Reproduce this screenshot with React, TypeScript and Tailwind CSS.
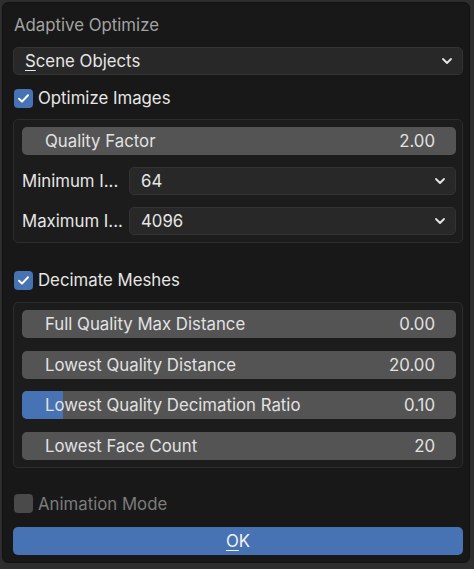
import type { ReactNode } from "react";

const FONT = { fontFamily: "Inter, 'DejaVu Sans', sans-serif" };

function Chevron() {
    return (
        <svg width="12" height="8" viewBox="0 0 12 8" className="shrink-0">
            <path d="M2 2 L6 6 L10 2" fill="none" stroke="#e6e6e6" strokeWidth="1.8" strokeLinecap="round" strokeLinejoin="round" />
        </svg>
    );
}

function Check({ on, label, disabled }: { on: boolean; label: string; disabled?: boolean }) {
    return (
        <div className="flex h-[20px] items-center gap-[5px] pl-[1px]">
            <span
                className={`flex h-[19px] w-[19px] items-center justify-center rounded-[4px] ${on ? "bg-[#4772b3]" : "bg-[#4a4a4a]"}`}
            >
                {on && (
                    <svg width="13" height="11" viewBox="0 0 13 11">
                        <path d="M2 5.8 L5 8.6 L11 2.2" fill="none" stroke="#ffffff" strokeWidth="2" strokeLinecap="round" strokeLinejoin="round" />
                    </svg>
                )}
            </span>
            <span className={`pt-[2px] text-[16.8px] ${disabled ? "text-[#7c7c7c]" : "text-[#e6e6e6]"}`}>{label}</span>
        </div>
    );
}

function Slider({ label, value, fill }: { label: string; value: string; fill?: number }) {
    return (
        <div className="relative flex h-[28px] items-center overflow-hidden rounded-[5px] bg-[#545454] pl-[23px] pr-[21px] pt-[2px] text-[16.8px] text-[#e2e2e2]">
            {fill !== undefined && (
                <div className="absolute inset-y-0 left-0 bg-[#4772b3]" style={{ width: `${fill * 100}%` }} />
            )}
            <span className="relative flex-1">{label}</span>
            <span className="relative">{value}</span>
        </div>
    );
}

function Select({ children, className = "" }: { children: ReactNode; className?: string }) {
    return (
        <div
            className={`flex h-[28px] items-center rounded-[5px] border border-[#333333] bg-[#282828] pl-[11px] pr-[9px] text-[16.8px] text-[#e6e6e6] ${className}`}
        >
            <span className="flex-1 pt-[2px]">{children}</span>
            <Chevron />
        </div>
    );
}

function Panel({ children, gap }: { children: ReactNode; gap: string }) {
    return (
        <div className={`flex flex-col rounded-[5px] border border-[#2c2c2c] bg-[#1c1c1c] pb-[7px] pl-[8px] pr-[6px] pt-[7px] ${gap}`}>
            {children}
        </div>
    );
}

export default function App() {
    return (
        <div className="h-[569px] w-[474px] bg-[#2e2e2e] pl-[2px] pt-[2px]" style={FONT}>
            <div className="flex h-[561px] w-[468px] flex-col rounded-[6px] border border-[#121212] bg-[#181818] pl-[10px] pr-[6px]">
                {/* title */}
                <div className="mt-[10px] flex h-[24px] items-center pl-[1px] pt-[2px] text-[16.8px] text-[#a3a3a3]">Adaptive Optimize</div>

                <Select className="mt-[10px] bg-[#2b2b2b]">
                    <span className="underline decoration-1 underline-offset-[3px]">S</span>cene Objects
                </Select>

                <div className="mt-[13px]">
                    <Check on label="Optimize Images" />
                </div>

                <div className="mt-[11px]">
                    <Panel gap="gap-[12px]">
                        <Slider label="Quality Factor" value="2.00" />
                        <div className="flex items-center">
                            <span className="w-[107px] pt-[2px] text-[16.8px] text-[#e6e6e6]">Minimum I...</span>
                            <Select className="flex-1">64</Select>
                        </div>
                        <div className="flex items-center">
                            <span className="w-[107px] pt-[2px] text-[16.8px] text-[#e6e6e6]">Maximum I...</span>
                            <Select className="flex-1">4096</Select>
                        </div>
                    </Panel>
                </div>

                <div className="mt-[27px]">
                    <Check on label="Decimate Meshes" />
                </div>

                <div className="mt-[12px]">
                    <Panel gap="gap-[12.5px]">
                        <Slider label="Full Quality Max Distance" value="0.00" />
                        <Slider label="Lowest Quality Distance" value="20.00" />
                        <Slider label="Lowest Quality Decimation Ratio" value="0.10" fill={0.095} />
                        <Slider label="Lowest Face Count" value="20" />
                    </Panel>
                </div>

                <div className="mt-[26px]">
                    <Check on={false} label="Animation Mode" disabled />
                </div>

                <button className="mt-[13px] flex h-[28px] items-center justify-center rounded-[5px] bg-[#4772b3] pt-[2px] text-[16.8px] text-[#f2f2f2]">
                    <span className="underline decoration-1 underline-offset-[3px]">O</span>K
                </button>
            </div>
        </div>
    );
}
